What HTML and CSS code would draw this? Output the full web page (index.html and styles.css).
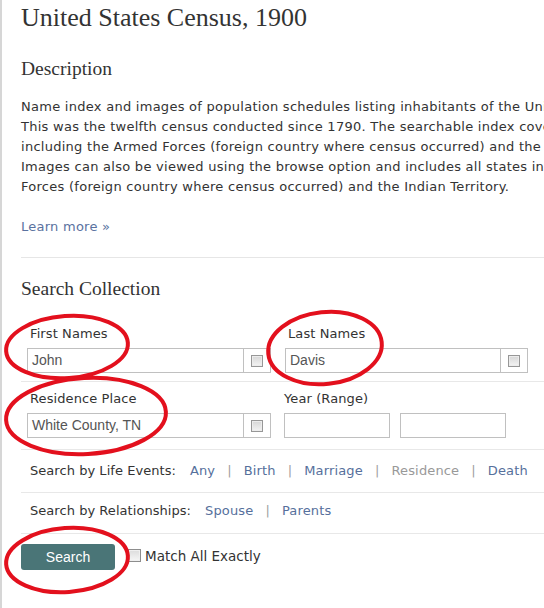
FILE: index.html
```html
<!DOCTYPE html>
<html lang="en">
<head>
<meta charset="utf-8">
<title>United States Census, 1900</title>
<link rel="stylesheet" href="styles.css">
</head>
<body>
<div class="page">
  <h1 class="title">United States Census, 1900</h1>
  <h2 class="heading desc-heading">Description</h2>
  <p class="desc">Name index and images of population schedules listing inhabitants of the United States in 1900, with a few exceptions.<br>This was the twelfth census conducted since 1790. The searchable index covers all states and territories,<br>including the Armed Forces (foreign country where census occurred) and the Indian Territory.<br>Images can also be viewed using the browse option and includes all states including the Armed<br>Forces (foreign country where census occurred) and the Indian Territory.</p>
  <a class="more" href="#">Learn more »</a>
  <div class="rule"></div>
  <h2 class="heading search-heading">Search Collection</h2>

  <div class="form">
    <div class="row fields first-row">
      <div class="field">
        <div class="label">First Names</div>
        <div class="box"><span class="val">John</span><span class="exact"><span class="cb"></span></span></div>
      </div>
      <div class="field">
        <div class="label">Last Names</div>
        <div class="box"><span class="val">Davis</span><span class="exact"><span class="cb"></span></span></div>
      </div>
    </div>
    <div class="row fields second-row">
      <div class="field">
        <div class="label">Residence Place</div>
        <div class="box"><span class="val">White County, TN</span><span class="exact"><span class="cb"></span></span></div>
      </div>
      <div class="field year-field">
        <div class="label year-label">Year (Range)</div>
        <div class="years"><span class="ybox"></span><span class="ybox"></span></div>
      </div>
    </div>
    <div class="row links-row life">
      <span class="lead">Search by Life Events:</span>
      <a class="lnk" href="#">Any</a><span class="sep">|</span>
      <a class="lnk" href="#">Birth</a><span class="sep">|</span>
      <a class="lnk" href="#">Marriage</a><span class="sep">|</span>
      <span class="lnk off">Residence</span><span class="sep">|</span>
      <a class="lnk" href="#">Death</a>
    </div>
    <div class="row links-row rel">
      <span class="lead">Search by Relationships:</span>
      <a class="lnk" href="#">Spouse</a><span class="sep">|</span>
      <a class="lnk" href="#">Parents</a>
    </div>
    <div class="submit-row">
      <span class="btn">Search</span>
      <span class="mcb"></span>
      <span class="mtext">Match All Exactly</span>
    </div>
  </div>

  <svg class="marks" width="544" height="608" viewBox="0 0 544 608" aria-hidden="true">
    <g fill="none" stroke="#e3101d" stroke-width="4">
      <ellipse cx="67" cy="347" rx="61" ry="31" transform="rotate(-4 67 347)"/>
      <ellipse cx="325" cy="348" rx="57" ry="36" transform="rotate(-6 325 348)"/>
      <ellipse cx="86" cy="416" rx="80" ry="38" transform="rotate(-3 86 416)"/>
      <ellipse cx="67" cy="560" rx="61" ry="32" transform="rotate(-4 67 560)"/>
    </g>
  </svg>
</div>
</body>
</html>
```

FILE: styles.css
```css
html, body {
  margin: 0;
  padding: 0;
  background: #fff;
}
.page {
  position: relative;
  box-sizing: border-box;
  width: 544px;
  height: 608px;
  overflow: hidden;
  border-left: 2px solid #d6d6d6;
  padding-left: 19px;
  font-family: "DejaVu Sans", Verdana, sans-serif;
  font-size: 13px;
  color: #333;
}
.title {
  margin: 0;
  padding-top: 3px;
  font-family: "Liberation Serif", "Times New Roman", serif;
  font-weight: normal;
  font-size: 26px;
  line-height: 30px;
  color: #333;
  white-space: nowrap;
}
.heading {
  margin: 0;
  font-family: "Liberation Serif", "Times New Roman", serif;
  font-weight: normal;
  font-size: 19.5px;
  line-height: 24px;
  color: #333;
  white-space: nowrap;
}
.desc-heading { margin-top: 24px; }
.desc {
  margin: 16px 0 0;
  line-height: 20px;
  letter-spacing: 0.27px;
  white-space: nowrap;
  width: 900px;
}
.more {
  display: block;
  margin-top: 20px;
  line-height: 20px;
  letter-spacing: 0.25px;
  color: #5a72a0;
  text-decoration: none;
}
.rule {
  margin-top: 20px;
  height: 1px;
  background: #e6e6e6;
  width: 900px;
}
.search-heading { margin-top: 19px; }

.form {
  width: 900px;
}
.row {
  border-bottom: 1px solid #e8e8e8;
  padding-left: 6px;
}
.fields {
  display: grid;
  grid-template-columns: 244px 243px;
  column-gap: 14px;
}
.first-row { margin-top: 23px; padding-bottom: 8px; }
.second-row { padding-top: 7px; padding-bottom: 11px; }
.label {
  line-height: 20px;
  padding-left: 3px;
  margin-bottom: 4px;
  letter-spacing: 0.1px;
  white-space: nowrap;
}
.year-field { margin-left: -1px; }
.year-label { padding-left: 0; }
.box {
  display: flex;
  height: 25px;
  box-sizing: border-box;
  border: 1px solid #c0c0c0;
}
.val {
  flex: 1;
  padding-left: 4px;
  font-family: "Liberation Sans", Arial, sans-serif;
  font-size: 14px;
  line-height: 23px;
  color: #555;
  white-space: nowrap;
}
.exact {
  width: 26px;
  border-left: 1px solid #c0c0c0;
  display: flex;
  align-items: center;
  justify-content: center;
}
.cb {
  width: 10px;
  height: 10px;
  border: 1px solid #979797;
  background: linear-gradient(#d6d6d6, #f4f4f4);
  box-shadow: inset 0 0 0 1px #ececec;
}
.years {
  display: flex;
  gap: 10px;
}
.ybox {
  width: 106px;
  height: 25px;
  box-sizing: border-box;
  border: 1px solid #c0c0c0;
}
.links-row {
  display: flex;
  align-items: center;
  padding-left: 9px;
  line-height: 20px;
  letter-spacing: 0.15px;
  white-space: nowrap;
}
.life { padding-top: 11px; padding-bottom: 11px; }
.rel { padding-top: 8px; padding-bottom: 12px; }
.lead { margin-right: 14px; letter-spacing: 0.05px; }
.lnk {
  color: #56709c;
  text-decoration: none;
}
.lnk.off { color: #999; }
.sep {
  color: #a0a0a0;
  margin: 0 12px;
}
.submit-row {
  display: flex;
  align-items: center;
  padding-top: 10px;
}
.btn {
  width: 94px;
  height: 26px;
  border-radius: 3px;
  background: #4a7577;
  color: #fff;
  font-family: "Liberation Sans", Arial, sans-serif;
  font-size: 14px;
  line-height: 26px;
  text-align: center;
}
.mcb {
  width: 11px;
  height: 11px;
  margin-left: 13px;
  margin-top: -4px;
  border: 1px solid #8d8d8d;
  background: linear-gradient(#dcdcdc, #f6f6f6);
  box-shadow: inset 0 0 0 1px #efefef;
}
.mtext {
  margin-left: 4px;
  margin-top: -2px;
  font-size: 13.5px;
  color: #333;
}
.marks {
  position: absolute;
  left: -2px;
  top: 0;
  pointer-events: none;
}
```
